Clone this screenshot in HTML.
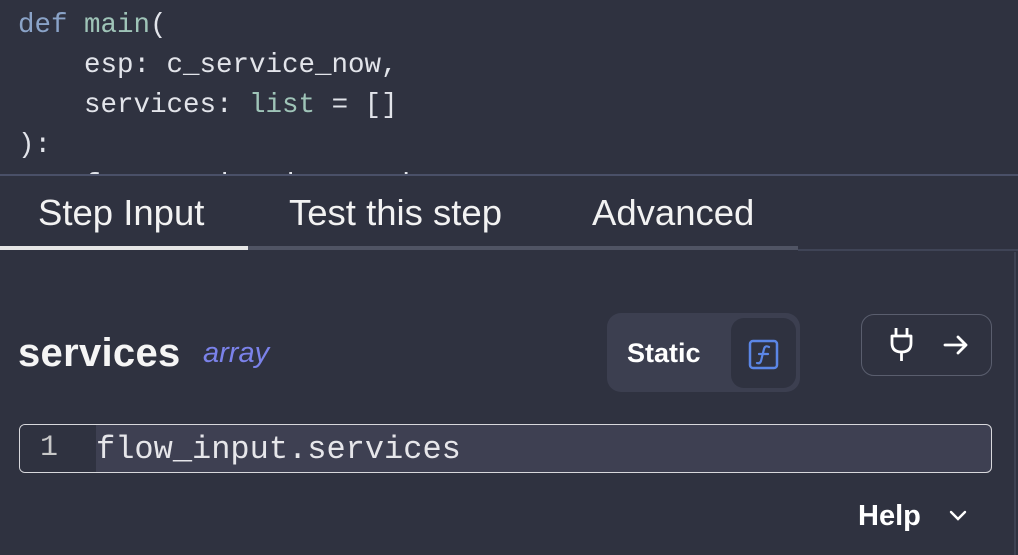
<!DOCTYPE html>
<html><head><style>
body{margin:0;width:1018px;height:555px;background:#2f3240;overflow:hidden;position:relative;font-family:"Liberation Sans",sans-serif;color:#fff}
.code{position:absolute;left:18px;top:6px;font-family:"Liberation Mono",monospace;font-size:27.5px;line-height:40px;color:#e2e4ea;white-space:pre;height:168px;overflow:hidden}
.k{color:#8aa3c8}.f{color:#9fc4b8}
.topline{position:absolute;left:0;top:174px;width:1018px;height:2px;background:#4a5068}
.tab{position:absolute;top:192px;font-size:36.5px;color:#f2f2f2}
.ul1{position:absolute;left:0;top:246px;width:248px;height:4px;background:#e6e6e6}
.ul2{position:absolute;left:248px;top:246px;width:550px;height:4px;background:#505464}
.ul3{position:absolute;left:798px;top:249px;width:220px;height:2px;background:#3f4456}
.rb{position:absolute;left:1014px;top:252px;width:2px;height:303px;background:#3d4252}
.name{position:absolute;left:18px;top:331px;font-size:40px;font-weight:bold;color:#f5f5f5;letter-spacing:0.3px}
.type{position:absolute;left:203px;top:337px;font-size:29px;font-style:italic;color:#7b82ea}
.tog{position:absolute;left:607px;top:313px;width:193px;height:79px;background:#3c3f50;border-radius:14px}
.tog span{position:absolute;left:20px;top:25px;font-size:27px;font-weight:bold}
.inner{position:absolute;left:124px;top:5px;width:65px;height:70px;background:#2f3240;border-radius:13px}
.btn{position:absolute;left:861px;top:314px;width:129px;height:60px;border:1.5px solid #5a5e6e;border-radius:13px}
.ed{position:absolute;left:19px;top:424px;width:971px;height:47px;border:1.5px solid #d8d8dc;border-radius:6px;background:#3e4052;overflow:hidden}
.gut{position:absolute;left:0;top:0;width:76px;height:47px;background:#2f3240}
.ln{position:absolute;left:20px;top:6px;font-family:"Liberation Mono",monospace;font-size:30px;color:#c8c8c8}
.txt{position:absolute;left:76px;top:6px;font-family:"Liberation Mono",monospace;font-size:32px;color:#e6e6ea}
.help{position:absolute;left:858px;top:500px;font-size:29px;font-weight:bold}
</style></head><body>
<div class="code"><span class="k">def</span> <span class="f">main</span>(
    esp: c_service_now,
    services: <span class="f">list</span> = []
):
    for service in services: pass</div>
<div class="topline"></div>
<div class="tab" style="left:38px">Step Input</div>
<div class="tab" style="left:289px">Test this step</div>
<div class="tab" style="left:592px">Advanced</div>
<div class="ul1"></div><div class="ul2"></div><div class="ul3"></div>
<div class="rb"></div>
<div class="name">services</div>
<div class="type">array</div>
<div class="tog"><span>Static</span><div class="inner">
<svg width="65" height="70" viewBox="0 0 65 70"><rect x="19" y="23" width="27" height="27" rx="3" fill="none" stroke="#5b86e6" stroke-width="2.5"/><path d="M38 29 Q34 27 33 31 L30 43 Q29 46 26 45 M28 36 H37" fill="none" stroke="#5b86e6" stroke-width="2.2" stroke-linecap="round"/></svg></div></div>
<div class="btn"><svg width="129" height="60" viewBox="0 0 129 60"><path d="M34 13 V21 M45 13 V21 M30 21 H49 V28 Q49 37 39.5 37 Q30 37 30 28 Z M39.5 37 V46" fill="none" stroke="#fff" stroke-width="2.8" stroke-linejoin="round"/><path d="M83 30 H104 M96 22 L104 30 L96 38" fill="none" stroke="#fff" stroke-width="2.8" stroke-linecap="round" stroke-linejoin="round"/></svg></div>
<div class="ed"><div class="gut"></div><div class="ln">1</div><div class="txt">flow_input.services</div></div>
<div class="help">Help</div>
<svg style="position:absolute;left:948px;top:509px" width="20" height="14" viewBox="0 0 20 14"><path d="M3 3 L10 10 L17 3" fill="none" stroke="#fff" stroke-width="2.4" stroke-linecap="round"/></svg>
</body></html>
